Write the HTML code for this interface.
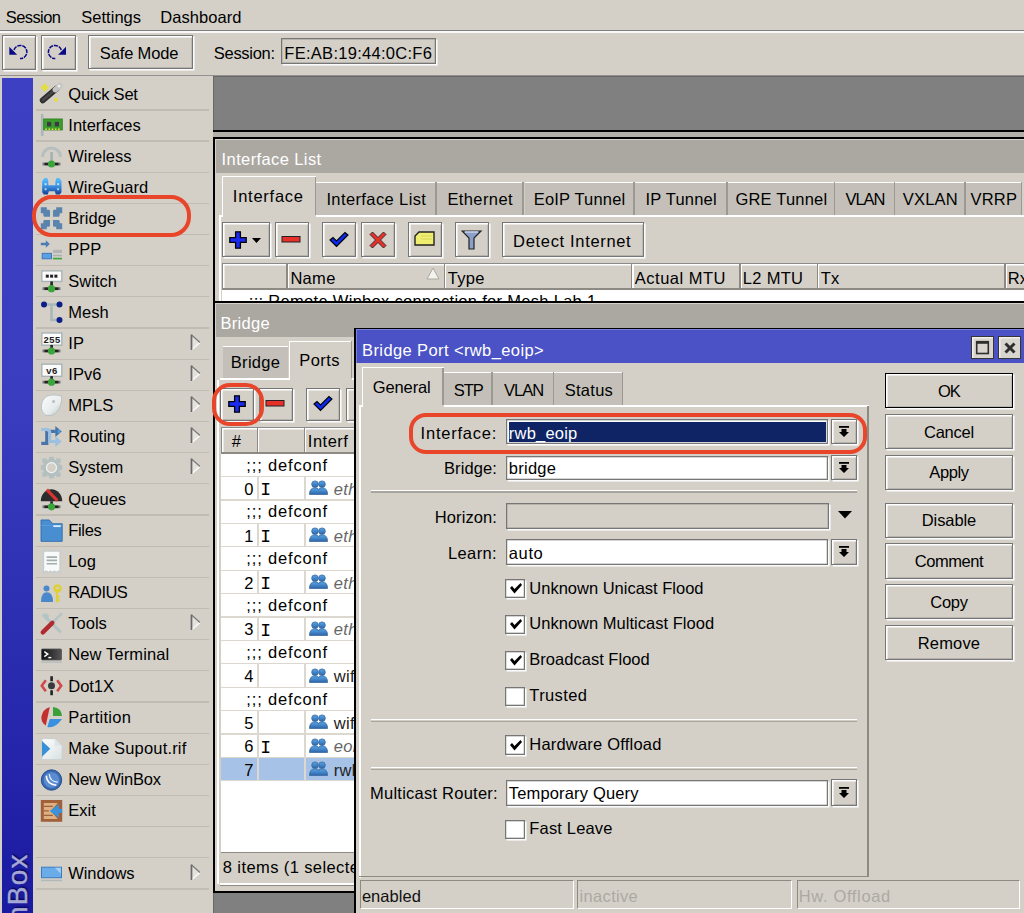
<!DOCTYPE html>
<html><head><meta charset="utf-8"><title>WinBox</title>
<style>
html,body{margin:0;padding:0;}
body{width:1024px;height:913px;position:relative;overflow:hidden;background:#d4d0c8;font-family:"Liberation Sans",sans-serif;font-size:16.5px;color:#000;}
.r{position:absolute;}
.t{position:absolute;white-space:nowrap;line-height:18px;}
.b{position:absolute;box-sizing:border-box;background:#d4d0c8;border:1px solid #767676;box-shadow:inset 1.6px 1.6px 0 #fff,inset 0 0 0 0.4px rgba(118,118,118,.6),1.6px 1.6px 0 #fbfbfb;}
.f{position:absolute;box-sizing:border-box;border:1px solid #767676;box-shadow:inset 0 0 0 0.4px rgba(118,118,118,.6),1.6px 1.6px 0 #fbfbfb;}
.wb{position:absolute;left:2.3px;top:957px;width:130px;height:32px;transform:rotate(-90deg);transform-origin:0 0;font-size:28px;line-height:32px;color:#a4a8d4;text-shadow:1.5px 1px 1.5px #08085a;white-space:nowrap;letter-spacing:1.2px;-webkit-text-stroke:0.4px #a4a8d4;}
</style></head><body>
<div class="t" style="left:5.8px;top:8.2px;letter-spacing:-0.59px;">Session</div>
<div class="t" style="left:81.3px;top:8.2px;letter-spacing:0.02px;">Settings</div>
<div class="t" style="left:160.3px;top:8.2px;letter-spacing:0.06px;">Dashboard</div>
<div class="r" style="left:0px;top:29.8px;width:1024px;height:1.1999999999999993px;background:#7e7e7e"></div>
<div class="r" style="left:0px;top:31px;width:1024px;height:1.7999999999999972px;background:#f8f8f8"></div>
<div class="b" style="left:2px;top:35px;width:34px;height:35px;"></div>
<div class="b" style="left:41px;top:35px;width:35px;height:35px;"></div>
<svg class="r" style="left:0;top:30" width="80" height="45" viewBox="0 30 80 45"><path d="M9.3 46.8 V54.7 H17.2 Z" fill="#0a0a86"/><path d="M14 50 A6.6 6.6 0 1 1 20 58.6" fill="none" stroke="#0a0a86" stroke-width="1.5" stroke-dasharray="4.2 0.9"/><path d="M66 46.8 V54.7 H58.1 Z" fill="#0a0a86"/><path d="M61.3 50 A6.6 6.6 0 1 0 55.3 58.6" fill="none" stroke="#0a0a86" stroke-width="1.5" stroke-dasharray="4.2 0.9"/></svg>
<div class="b" style="left:88px;top:35px;width:105px;height:34px;"></div>
<div class="t" style="left:99.8px;top:43.7px;letter-spacing:-0.14px;">Safe Mode</div>
<div class="t" style="left:213.8px;top:43.7px;letter-spacing:-0.3px">Session:</div>
<div class="f" style="left:281px;top:38px;width:155px;height:26px;background:#d4d0c8"></div>
<div class="t" style="left:284.3px;top:43.7px;letter-spacing:0.28px">FE:AB:19:44:0C:F6</div>
<div class="r" style="left:0px;top:74.6px;width:1024px;height:1.3000000000000114px;background:#939190"></div>
<div class="r" style="left:0px;top:76px;width:2px;height:837px;background:#d4d0c8"></div>
<div class="r" style="left:2px;top:78px;width:31px;height:835px;background:linear-gradient(#3d40c3 0%,#3b3dc0 38%,#2a2cb0 70%,#1a1aa0 100%)"></div>
<div class="wb">WinBox</div>
<div class="r" style="left:33px;top:76px;width:179px;height:837px;background:#d4d0c8"></div>
<div class="t" style="left:68.3px;top:84.5px;letter-spacing:-0.24px;">Quick Set</div>
<div class="r" style="left:36px;top:109.3px;width:173px;height:1.2999999999999972px;background:#c0bcb4"></div>
<div class="t" style="left:68.3px;top:115.7px;">Interfaces</div>
<div class="r" style="left:36px;top:140.4px;width:173px;height:1.299999999999983px;background:#c0bcb4"></div>
<div class="t" style="left:68.3px;top:146.8px;">Wireless</div>
<div class="r" style="left:36px;top:171.6px;width:173px;height:1.3000000000000114px;background:#c0bcb4"></div>
<div class="t" style="left:68.3px;top:178.0px;">WireGuard</div>
<div class="r" style="left:36px;top:202.7px;width:173px;height:1.3000000000000114px;background:#c0bcb4"></div>
<div class="t" style="left:68.3px;top:209.1px;">Bridge</div>
<div class="r" style="left:36px;top:233.9px;width:173px;height:1.299999999999983px;background:#c0bcb4"></div>
<div class="t" style="left:68.3px;top:240.3px;">PPP</div>
<div class="r" style="left:36px;top:265.1px;width:173px;height:1.2999999999999545px;background:#c0bcb4"></div>
<div class="t" style="left:68.3px;top:271.5px;">Switch</div>
<div class="r" style="left:36px;top:296.2px;width:173px;height:1.3000000000000114px;background:#c0bcb4"></div>
<div class="t" style="left:68.3px;top:302.6px;">Mesh</div>
<div class="r" style="left:36px;top:327.4px;width:173px;height:1.3000000000000114px;background:#c0bcb4"></div>
<div class="t" style="left:68.3px;top:333.8px;">IP</div>
<svg class="r" style="left:189.5px;top:333.8px" width="12" height="18" viewBox="0 0 12 18"><path d="M1.5 1 L10 8.5 L1.5 16 Z" fill="#e4e2dc"/><path d="M10 8.5 L1.5 16" stroke="#fafafa" stroke-width="1.5"/><path d="M1.5 1 L10 8.5" stroke="#7a7a7a" stroke-width="1.2"/><path d="M1.5 0.5 V16" stroke="#686868" stroke-width="1.7"/></svg>
<div class="r" style="left:36px;top:358.5px;width:173px;height:1.3000000000000114px;background:#c0bcb4"></div>
<div class="t" style="left:68.3px;top:364.9px;">IPv6</div>
<svg class="r" style="left:189.5px;top:364.9px" width="12" height="18" viewBox="0 0 12 18"><path d="M1.5 1 L10 8.5 L1.5 16 Z" fill="#e4e2dc"/><path d="M10 8.5 L1.5 16" stroke="#fafafa" stroke-width="1.5"/><path d="M1.5 1 L10 8.5" stroke="#7a7a7a" stroke-width="1.2"/><path d="M1.5 0.5 V16" stroke="#686868" stroke-width="1.7"/></svg>
<div class="r" style="left:36px;top:389.7px;width:173px;height:1.3000000000000114px;background:#c0bcb4"></div>
<div class="t" style="left:68.3px;top:396.1px;">MPLS</div>
<svg class="r" style="left:189.5px;top:396.1px" width="12" height="18" viewBox="0 0 12 18"><path d="M1.5 1 L10 8.5 L1.5 16 Z" fill="#e4e2dc"/><path d="M10 8.5 L1.5 16" stroke="#fafafa" stroke-width="1.5"/><path d="M1.5 1 L10 8.5" stroke="#7a7a7a" stroke-width="1.2"/><path d="M1.5 0.5 V16" stroke="#686868" stroke-width="1.7"/></svg>
<div class="r" style="left:36px;top:420.9px;width:173px;height:1.3000000000000114px;background:#c0bcb4"></div>
<div class="t" style="left:68.3px;top:427.3px;">Routing</div>
<svg class="r" style="left:189.5px;top:427.3px" width="12" height="18" viewBox="0 0 12 18"><path d="M1.5 1 L10 8.5 L1.5 16 Z" fill="#e4e2dc"/><path d="M10 8.5 L1.5 16" stroke="#fafafa" stroke-width="1.5"/><path d="M1.5 1 L10 8.5" stroke="#7a7a7a" stroke-width="1.2"/><path d="M1.5 0.5 V16" stroke="#686868" stroke-width="1.7"/></svg>
<div class="r" style="left:36px;top:452.0px;width:173px;height:1.3000000000000114px;background:#c0bcb4"></div>
<div class="t" style="left:68.3px;top:458.4px;">System</div>
<svg class="r" style="left:189.5px;top:458.4px" width="12" height="18" viewBox="0 0 12 18"><path d="M1.5 1 L10 8.5 L1.5 16 Z" fill="#e4e2dc"/><path d="M10 8.5 L1.5 16" stroke="#fafafa" stroke-width="1.5"/><path d="M1.5 1 L10 8.5" stroke="#7a7a7a" stroke-width="1.2"/><path d="M1.5 0.5 V16" stroke="#686868" stroke-width="1.7"/></svg>
<div class="r" style="left:36px;top:483.2px;width:173px;height:1.3000000000000114px;background:#c0bcb4"></div>
<div class="t" style="left:68.3px;top:489.6px;">Queues</div>
<div class="r" style="left:36px;top:514.3px;width:173px;height:1.3000000000000682px;background:#c0bcb4"></div>
<div class="t" style="left:68.3px;top:520.7px;letter-spacing:-0.35px;">Files</div>
<div class="r" style="left:36px;top:545.5px;width:173px;height:1.2999999999999545px;background:#c0bcb4"></div>
<div class="t" style="left:68.3px;top:551.9px;">Log</div>
<div class="r" style="left:36px;top:576.7px;width:173px;height:1.2999999999999545px;background:#c0bcb4"></div>
<div class="t" style="left:68.3px;top:583.1px;letter-spacing:-0.57px;">RADIUS</div>
<div class="r" style="left:36px;top:607.8px;width:173px;height:1.3000000000000682px;background:#c0bcb4"></div>
<div class="t" style="left:68.3px;top:614.2px;">Tools</div>
<svg class="r" style="left:189.5px;top:614.2px" width="12" height="18" viewBox="0 0 12 18"><path d="M1.5 1 L10 8.5 L1.5 16 Z" fill="#e4e2dc"/><path d="M10 8.5 L1.5 16" stroke="#fafafa" stroke-width="1.5"/><path d="M1.5 1 L10 8.5" stroke="#7a7a7a" stroke-width="1.2"/><path d="M1.5 0.5 V16" stroke="#686868" stroke-width="1.7"/></svg>
<div class="r" style="left:36px;top:639.0px;width:173px;height:1.2999999999999545px;background:#c0bcb4"></div>
<div class="t" style="left:68.3px;top:645.4px;letter-spacing:0.11px;">New Terminal</div>
<div class="r" style="left:36px;top:670.1px;width:173px;height:1.2999999999999545px;background:#c0bcb4"></div>
<div class="t" style="left:68.3px;top:676.5px;letter-spacing:-0.04px;">Dot1X</div>
<div class="r" style="left:36px;top:701.3px;width:173px;height:1.3000000000000682px;background:#c0bcb4"></div>
<div class="t" style="left:68.3px;top:707.7px;letter-spacing:0.26px;">Partition</div>
<div class="r" style="left:36px;top:732.5px;width:173px;height:1.2999999999999545px;background:#c0bcb4"></div>
<div class="t" style="left:68.3px;top:738.9px;letter-spacing:0.17px;">Make Supout.rif</div>
<div class="r" style="left:36px;top:763.6px;width:173px;height:1.2999999999999545px;background:#c0bcb4"></div>
<div class="t" style="left:68.3px;top:770.0px;letter-spacing:-0.18px;">New WinBox</div>
<div class="r" style="left:36px;top:794.8px;width:173px;height:1.3000000000000682px;background:#c0bcb4"></div>
<div class="t" style="left:68.3px;top:801.2px;">Exit</div>
<div class="r" style="left:36px;top:825.9px;width:173px;height:1.3000000000000682px;background:#c0bcb4"></div>
<div class="r" style="left:36px;top:857.1px;width:173px;height:1.2999999999999545px;background:#c0bcb4"></div>
<div class="t" style="left:68.3px;top:863.5px;letter-spacing:-0.11px;">Windows</div>
<svg class="r" style="left:189.5px;top:863.5px" width="12" height="18" viewBox="0 0 12 18"><path d="M1.5 1 L10 8.5 L1.5 16 Z" fill="#e4e2dc"/><path d="M10 8.5 L1.5 16" stroke="#fafafa" stroke-width="1.5"/><path d="M1.5 1 L10 8.5" stroke="#7a7a7a" stroke-width="1.2"/><path d="M1.5 0.5 V16" stroke="#686868" stroke-width="1.7"/></svg>
<svg class="r" style="left:0;top:0" width="212" height="913"><defs><linearGradient id="wgg" x1="0" y1="0" x2="0" y2="1"><stop offset="0" stop-color="#5cc0ff"/><stop offset="0.5" stop-color="#3a90e0"/><stop offset="1" stop-color="#163e98"/></linearGradient><linearGradient id="barg" x1="0" y1="0" x2="1" y2="0"><stop offset="0" stop-color="#222" stop-opacity="0"/><stop offset="0.2" stop-color="#222"/><stop offset="0.8" stop-color="#222"/><stop offset="1" stop-color="#222" stop-opacity="0"/></linearGradient><linearGradient id="mplsg" x1="0" y1="0" x2="1" y2="1"><stop offset="0" stop-color="#fafcfc"/><stop offset="0.6" stop-color="#e8ecec"/><stop offset="1" stop-color="#b8c2c2"/></linearGradient><linearGradient id="termg" x1="0" y1="0" x2="1" y2="0"><stop offset="0" stop-color="#111"/><stop offset="1" stop-color="#555"/></linearGradient><linearGradient id="supg" x1="0" y1="0" x2="1" y2="1"><stop offset="0" stop-color="#fff"/><stop offset="1" stop-color="#d8e0e0"/></linearGradient></defs><g transform="translate(40.8,82.70)"><path d="M2 17.5 L15.5 6" stroke="#2e2e2e" stroke-width="6" stroke-linecap="round"/><path d="M2 17.5 L15.5 6" stroke="#484848" stroke-width="2.5" stroke-linecap="round"/><path d="M14.5 7 L19 3" stroke="#c4c4c4" stroke-width="5.5" stroke-linecap="round"/><circle cx="18.3" cy="3.5" r="1.4" fill="#eee"/><path d="M0.3 4.8 H7.7 M4 1 V8.6" stroke="#e2de40" stroke-width="3"/><circle cx="15.2" cy="17" r="2" fill="#e2de40"/></g><g transform="translate(40.8,113.86)"><rect x="0.1" y="0.2" width="2.6" height="21.8" fill="#a8b8b8"/><rect x="2.9" y="5.1" width="18.6" height="11" fill="#3c9e2a" stroke="#2a7a1c" stroke-width="0.8"/><rect x="6.2" y="8" width="4.2" height="4.6" fill="#3a3a44"/><rect x="14" y="8" width="4.2" height="4.6" fill="#3a3a44"/><path d="M4.5 15.3 H20.5" stroke="#e6e040" stroke-width="1.5" stroke-dasharray="1.6 1.6"/></g><g transform="translate(40.8,145.02)"><path d="M1.7 12 A9 9 0 0 1 19.7 12" fill="none" stroke="#b6bebe" stroke-width="3"/><rect x="9.5" y="7" width="2.6" height="11" fill="#a4b2b2"/><rect x="0.7" y="17.6" width="20" height="2.8" fill="url(#barg)"/><circle cx="10.7" cy="19" r="3.6" fill="#3aa53a"/></g><g transform="translate(40.8,176.18)"><path d="M1.4 5 L3.5 1.8 H6.5 L7.5 5 V9 H14.6 V5 L15.6 1.8 H18.6 L20.7 5 V16 L19 18.3 H15 L14 15 H8 L7 18.3 H3 L1.4 16 Z" fill="url(#wgg)"/><rect x="3.8" y="7" width="2" height="2" fill="#bfe4ff"/><rect x="16.3" y="7" width="2" height="2" fill="#bfe4ff"/><rect x="3.8" y="12" width="2" height="2" fill="#a8d0f0"/><rect x="16.3" y="12" width="2" height="2" fill="#a8d0f0"/></g><g transform="translate(40.8,207.34)"><g fill="#5a84ae"><path d="M0 0 H6 V2.5 H8.5 V3 H9.2 V9.3 H3 V8.5 H2.5 V6 H0 Z"/><path d="M0 0 H6 V2.5 H8.5 V3 H9.2 V9.3 H3 V8.5 H2.5 V6 H0 Z" transform="translate(21.4,0) scale(-1,1)"/><path d="M0 0 H6 V2.5 H8.5 V3 H9.2 V9.3 H3 V8.5 H2.5 V6 H0 Z" transform="translate(0,21.9) scale(1,-1)"/><path d="M0 0 H6 V2.5 H8.5 V3 H9.2 V9.3 H3 V8.5 H2.5 V6 H0 Z" transform="translate(21.4,21.9) scale(-1,-1)"/></g></g><g transform="translate(40.8,238.50)"><path d="M0 4.3 H5 V1.7 L9 5.5 L5 9.3 V6.7 H0 Z" fill="#4c7cb4"/><rect x="1.4" y="14.8" width="9.3" height="5.5" fill="#5aa0e4" stroke="#3a72b4" stroke-width="0.9"/><rect x="12.2" y="11.3" width="9" height="3.2" fill="#b4b4b4"/><rect x="12.2" y="16.3" width="9" height="1.5" fill="#a8b0b0"/><rect x="12.2" y="19.3" width="9" height="1.6" fill="#3aa53a"/></g><g transform="translate(40.8,269.66)"><rect x="1" y="1.2" width="20" height="10.6" fill="#fbfbfb" stroke="#a8b4b4" stroke-width="1.4"/><rect x="5" y="5" width="3" height="3" fill="#222"/><rect x="9.3" y="5" width="3" height="3" fill="#222"/><rect x="13.6" y="5" width="3" height="3" fill="#222"/><rect x="9.5" y="11.8" width="2.6" height="5" fill="#222"/><rect x="0.7" y="17.6" width="20" height="2.8" fill="url(#barg)"/><circle cx="10.7" cy="19" r="3.6" fill="#3aa53a"/></g><g transform="translate(40.8,300.82)"><path d="M3.2 3.7 H18.7 M10.7 3.7 V19.2 H18.7" fill="none" stroke="#a8b8b8" stroke-width="2.6"/><circle cx="3.2" cy="3.7" r="3" fill="#0e1e88"/><circle cx="18.7" cy="3.7" r="3" fill="#0e1e88"/><circle cx="18.7" cy="19.2" r="3" fill="#0e1e88"/></g><g transform="translate(40.8,331.98)"><rect x="1" y="1" width="20" height="12.2" fill="#fbfbfb" stroke="#a8b4b4" stroke-width="1.4"/><text x="11" y="10.8" font-family="Liberation Mono" font-size="9.5" font-weight="bold" text-anchor="middle" fill="#222">255</text><rect x="9.5" y="13" width="2.6" height="4" fill="#222"/><rect x="0.7" y="17.6" width="20" height="2.8" fill="url(#barg)"/><circle cx="10.7" cy="19" r="3.6" fill="#3aa53a"/></g><g transform="translate(40.8,363.14)"><rect x="1" y="1" width="20" height="12.2" fill="#fbfbfb" stroke="#a8b4b4" stroke-width="1.4"/><text x="11" y="10.8" font-family="Liberation Mono" font-size="9.5" font-weight="bold" text-anchor="middle" fill="#222">v6</text><rect x="9.5" y="13" width="2.6" height="4" fill="#222"/><rect x="0.7" y="17.6" width="20" height="2.8" fill="url(#barg)"/><circle cx="10.7" cy="19" r="3.6" fill="#3aa53a"/></g><g transform="translate(40.8,394.30)"><path d="M10 0.8 Q18 0.3 21 2 Q21.5 12 15 19 Q10 22.5 5 21 Q0.2 18 0.5 11.5 Q1.5 2 10 0.8 Z" fill="url(#mplsg)" stroke="#b8c2c2" stroke-width="1"/><rect x="11.5" y="6" width="2.5" height="2.5" fill="#b0b8b8"/></g><g transform="translate(40.8,425.46)"><path d="M0.5 18 H6 V6 H15" fill="none" stroke="#4a74a8" stroke-width="3.2"/><path d="M0.5 4 H6 Q9 4 9 8 V16 H15" fill="none" stroke="#9cc0e0" stroke-width="3"/><path d="M14.5 0.5 L21 6 L14.5 11.5 Z" fill="#4a74a8"/><path d="M14.5 10.5 L21 16 L14.5 21.5 Z" fill="#9cc0e0"/><rect x="17" y="4.5" width="2" height="3" fill="#40a8f0"/></g><g transform="translate(40.8,456.62)"><circle cx="10.7" cy="11" r="7.2" fill="none" stroke="#b4c0c0" stroke-width="3.4"/><circle cx="10.7" cy="11" r="5" fill="none" stroke="#eef2f2" stroke-width="1.2"/><g fill="#b4c0c0"><rect x="8.2" y="0.2" width="5" height="3.5"/><rect x="8.2" y="18.3" width="5" height="3.5"/><rect x="0" y="8.5" width="3.5" height="5"/><rect x="17.9" y="8.5" width="3.5" height="5"/><rect x="1.5" y="1.8" width="4.5" height="4.5" transform="rotate(0)"/><rect x="15.4" y="1.8" width="4.5" height="4.5"/><rect x="1.5" y="15.7" width="4.5" height="4.5"/><rect x="15.4" y="15.7" width="4.5" height="4.5"/></g></g><g transform="translate(40.8,487.78)"><path d="M0 13.5 A10.7 12 0 0 1 21.4 13.5 Z" fill="#2c2c2c"/><path d="M6 1.8 L16.5 12.8" stroke="#d83434" stroke-width="3.2"/><rect x="9.5" y="13.5" width="2.6" height="3" fill="#222"/><rect x="0.7" y="17.6" width="20" height="2.8" fill="url(#barg)"/><circle cx="10.7" cy="19" r="3.6" fill="#3aa53a"/></g><g transform="translate(40.8,518.94)"><path d="M0.2 1 H8.5 L12 4.8 H21.4 V22.4 H0.2 Z" fill="#4a8ed2" stroke="#2e6cae" stroke-width="0.9"/><path d="M0.2 6.5 H21.4" stroke="#5a9ede" stroke-width="0.8"/><rect x="12.5" y="6.3" width="7.5" height="1.8" fill="#dcecfa"/></g><g transform="translate(40.8,550.10)"><path d="M2.7 1 H19.2 V22.5 L17.5 21 L15.5 22.5 L13.5 21 L11.5 22.5 L9.5 21 L7.5 22.5 L5.5 21 L2.7 22.5 Z" fill="#f8fafa" stroke="#c4cccc" stroke-width="1.3"/><path d="M5.8 7 H16.2 M5.8 10.3 H16.2 M5.8 13.6 H16.2" stroke="#a4acac" stroke-width="1.6"/></g><g transform="translate(40.8,581.26)"><circle cx="5.7" cy="7.3" r="3" fill="#4a88cc"/><path d="M0.2 20.7 Q0.2 11 6 11 Q12.2 11 12.2 20.7 Z" fill="#4a88cc"/><circle cx="16.7" cy="7.3" r="4.3" fill="#ddd03a"/><rect x="15" y="6" width="3.4" height="1.6" fill="#d4d0c8"/><path d="M16.2 11 V21 M16.2 15.5 H19 M16.2 19 H19" stroke="#ddd03a" stroke-width="2.2"/></g><g transform="translate(40.8,612.42)"><path d="M5 5 L20 20" stroke="#b4c4c4" stroke-width="3.2"/><path d="M0.5 3.5 L3.5 0.5 L5 3 L3 5 Z M5.5 0.5 L8.5 3.5 L6 7 L3 6 Z" fill="#b4c4c4"/><path d="M21 1 L12 10" stroke="#b4c4c4" stroke-width="2.6"/><path d="M11.5 10.5 L2 20" stroke="#b02a30" stroke-width="4.4" stroke-linecap="round"/></g><g transform="translate(40.8,643.58)"><rect x="0.7" y="5.4" width="20" height="11" rx="1" fill="url(#termg)" stroke="#555" stroke-width="0.8"/><path d="M3.5 8 L7 10.5 L3.5 13" fill="none" stroke="#fff" stroke-width="1.4"/><path d="M7.5 14 H10.5" stroke="#fff" stroke-width="1.4"/><rect x="0.2" y="17.8" width="21" height="1.4" fill="#b4bcbc"/></g><g transform="translate(40.8,674.74)"><path d="M5 5.5 L1 11 L5 16.5 M16.4 5.5 L20.4 11 L16.4 16.5" fill="none" stroke="#d04848" stroke-width="2.6"/><rect x="9.5" y="1.5" width="2.6" height="5" fill="#222"/><rect x="9.5" y="15.5" width="2.6" height="5" fill="#222"/><circle cx="10.7" cy="11" r="3.5" fill="#3a3a3a"/></g><g transform="translate(40.8,705.90)"><path d="M9 1 Q2 3 0.5 11 Q0.5 17 5 19.5 L9 1 Z" fill="#c43030"/><path d="M12.2 1 V10 H21.2 Q21 2 12.2 1 Z" fill="#3aa03a"/><path d="M6.5 21 Q14 23 21.2 13 H9 Z" fill="#3a90e0"/></g><g transform="translate(40.8,737.06)"><path d="M1.2 1.6 H14 L21.4 9 V22.6 H1.2 Z" fill="url(#supg)" stroke="#c8d0d0" stroke-width="1"/><path d="M14 1.6 V9 H21.4 Z" fill="#dfe4e8"/><path d="M1.2 4 L9.5 11.8 L1.2 19.8 Z" fill="#3a90d8"/></g><g transform="translate(40.8,768.22)"><circle cx="10.7" cy="11.8" r="10.2" fill="#3a6ab4" stroke="#24508e" stroke-width="1"/><circle cx="10.7" cy="11.8" r="7.8" fill="#5c8cd0"/><path d="M5.5 7.5 Q6 16 15.5 17" fill="none" stroke="#fff" stroke-width="1.6"/><path d="M8.5 6 Q9 13.5 17 14" fill="none" stroke="#e8f0ff" stroke-width="1.2"/></g><g transform="translate(40.8,799.38)"><rect x="0" y="0.6" width="21.4" height="21.8" fill="#a0603a"/><path d="M3 3.5 H17 L10 11.5 L17 19.5 H3 Z" fill="#e4b888" opacity="0.9"/><path d="M3 7 H12 M3 11.5 H8 M3 16 H12" stroke="#a0603a" stroke-width="1.4"/><path d="M9 11.5 L18 4.5 V18.5 Z" fill="#3a92dc"/><rect x="17" y="9.5" width="4.4" height="4" fill="#3a92dc"/></g><g transform="translate(40.8,861.70)"><rect x="0.7" y="5.5" width="20" height="10.5" fill="#6aace8" stroke="#3a7cc4" stroke-width="1"/><path d="M14 6 L20 6 L20 12 Z" fill="#a8d0f4"/><rect x="0.2" y="18" width="21" height="1.5" fill="#b0b8b8"/></g></svg>
<div class="r" style="left:36px;top:888.2px;width:173px;height:1.5px;background:#c2beb6"></div>
<div class="r" style="left:31.5px;top:195px;width:159.5px;height:42px;border:4.4px solid #e8452a;border-radius:20px;box-sizing:border-box"></div>
<div class="r" style="left:212.5px;top:76px;width:811.5px;height:837px;background:#808080;border-left:1.5px solid #686868;border-top:1.5px solid #686868;box-sizing:border-box"></div>
<div class="r" style="left:213px;top:130px;width:811px;height:1.5px;background:#000"></div>
<div class="r" style="left:213px;top:131.5px;width:811px;height:5.699999999999989px;background:#b2afa8"></div>
<div class="r" style="left:213px;top:137.2px;width:811px;height:163.8px;background:#000"></div>
<div class="r" style="left:215.2px;top:138.7px;width:808.8px;height:162.3px;background:#d4d0c8"></div>
<div class="r" style="left:216px;top:140px;width:808px;height:32.599999999999994px;background:#aba8a2"></div>
<div class="t" style="left:221.6px;top:150.4px;color:#fff;letter-spacing:0.39px;">Interface List</div>
<div class="r" style="left:219px;top:215px;width:805px;height:1.5px;background:#fff"></div>
<div class="r" style="left:316px;top:181.8px;width:119.5px;height:33.19999999999999px;background:#c4c0b9;border-top:1.2px solid #fff;box-sizing:border-box"></div>
<div class="r" style="left:435.2px;top:181.8px;width:1.5px;height:33.19999999999999px;background:#9c9992"></div>
<div class="t" style="left:316px;width:120.69999999999999px;text-align:center;top:190.4px;letter-spacing:0.39px;">Interface List</div>
<div class="r" style="left:436.7px;top:181.8px;width:85.80000000000001px;height:33.19999999999999px;background:#c4c0b9;border-top:1.2px solid #fff;box-sizing:border-box"></div>
<div class="r" style="left:522.2px;top:181.8px;width:1.5px;height:33.19999999999999px;background:#9c9992"></div>
<div class="t" style="left:436.7px;width:87.00000000000006px;text-align:center;top:190.4px;letter-spacing:0.39px;">Ethernet</div>
<div class="r" style="left:524.6px;top:181.8px;width:108.79999999999995px;height:33.19999999999999px;background:#c4c0b9;border-top:1.2px solid #fff;box-sizing:border-box"></div>
<div class="r" style="left:633.1px;top:181.8px;width:1.5px;height:33.19999999999999px;background:#9c9992"></div>
<div class="t" style="left:524.6px;width:110.0px;text-align:center;top:190.4px;letter-spacing:0.2px">EoIP Tunnel</div>
<div class="r" style="left:634.6px;top:181.8px;width:91.89999999999998px;height:33.19999999999999px;background:#c4c0b9;border-top:1.2px solid #fff;box-sizing:border-box"></div>
<div class="r" style="left:726.2px;top:181.8px;width:1.5px;height:33.19999999999999px;background:#9c9992"></div>
<div class="t" style="left:634.6px;width:93.10000000000002px;text-align:center;top:190.4px;letter-spacing:0.2px">IP Tunnel</div>
<div class="r" style="left:727.7px;top:181.8px;width:106.09999999999991px;height:33.19999999999999px;background:#c4c0b9;border-top:1.2px solid #fff;box-sizing:border-box"></div>
<div class="r" style="left:833.5px;top:181.8px;width:1.5px;height:33.19999999999999px;background:#9c9992"></div>
<div class="t" style="left:727.7px;width:107.29999999999995px;text-align:center;top:190.4px;letter-spacing:0.2px">GRE Tunnel</div>
<div class="r" style="left:835px;top:181.8px;width:58.799999999999955px;height:33.19999999999999px;background:#c4c0b9;border-top:1.2px solid #fff;box-sizing:border-box"></div>
<div class="r" style="left:893.5px;top:181.8px;width:1.5px;height:33.19999999999999px;background:#9c9992"></div>
<div class="t" style="left:835px;width:60px;text-align:center;top:190.4px;letter-spacing:-1.0px;">VLAN</div>
<div class="r" style="left:895px;top:181.8px;width:69.5px;height:33.19999999999999px;background:#c4c0b9;border-top:1.2px solid #fff;box-sizing:border-box"></div>
<div class="r" style="left:964.2px;top:181.8px;width:1.5px;height:33.19999999999999px;background:#9c9992"></div>
<div class="t" style="left:895px;width:70.70000000000005px;text-align:center;top:190.4px;letter-spacing:0.2px">VXLAN</div>
<div class="r" style="left:965.7px;top:181.8px;width:55.09999999999991px;height:33.19999999999999px;background:#c4c0b9;border-top:1.2px solid #fff;box-sizing:border-box"></div>
<div class="r" style="left:1020.5px;top:181.8px;width:1.5px;height:33.19999999999999px;background:#9c9992"></div>
<div class="t" style="left:965.7px;width:56.299999999999955px;text-align:center;top:190.4px;letter-spacing:0.2px">VRRP</div>
<div class="r" style="left:222px;top:176.4px;width:94px;height:40.599999999999994px;background:#d4d0c8;border-left:1.3px solid #fff;border-top:1.3px solid #fff;box-sizing:border-box"></div>
<div class="r" style="left:314.7px;top:177px;width:1.8000000000000114px;height:38px;background:#9c9992"></div>
<div class="t" style="left:232.8px;top:187.4px;letter-spacing:0.75px;">Interface</div>
<div class="r" style="left:219px;top:216.5px;width:1.5px;height:84.5px;background:#fff"></div>
<div class="b" style="left:222.4px;top:222px;width:47.599999999999994px;height:35.30000000000001px;"></div>
<svg class="r" style="left:229px;top:231px" width="40" height="20" viewBox="0 0 40 20"><path d="M6.6 0.8 H11.4 V6.6 H17.2 V11.4 H11.4 V17.2 H6.6 V11.4 H0.8 V6.6 H6.6 Z" fill="#1a2af0" stroke="#000" stroke-width="1.3"/><path d="M23 7 H32 L27.5 12 Z" fill="#000"/></svg>
<div class="b" style="left:275.2px;top:222px;width:33.80000000000001px;height:35.30000000000001px;"></div>
<svg class="r" style="left:281px;top:235px" width="22" height="10" viewBox="0 0 22 10"><rect x="1" y="1.5" width="18" height="5.5" fill="#e8302a" stroke="#222" stroke-width="1"/></svg>
<div class="b" style="left:322px;top:222px;width:34px;height:35.30000000000001px;"></div>
<svg class="r" style="left:329px;top:231px" width="20" height="17" viewBox="0 0 20 17"><path d="M1 9 L4 6.5 L7.5 10 L16 1.5 L19 4 L7.5 15.5 Z" fill="#0a2aee" stroke="#000" stroke-width="1.1"/></svg>
<div class="b" style="left:361px;top:222px;width:33.69999999999999px;height:35.30000000000001px;"></div>
<svg class="r" style="left:368px;top:230px" width="20" height="20" viewBox="0 0 20 20"><path d="M2 4.5 L4.5 2 L10 7.5 L15.5 2 L18 4.5 L12.5 10 L18 15.5 L15.5 18 L10 12.5 L4.5 18 L2 15.5 L7.5 10 Z" fill="#e8302a" stroke="#222" stroke-width="0.9"/></svg>
<div class="b" style="left:407.7px;top:222px;width:34.30000000000001px;height:35.30000000000001px;"></div>
<svg class="r" style="left:414px;top:230px" width="22" height="18" viewBox="0 0 22 18"><path d="M5 2 H20 V15 H1 V6 Z" fill="#f0ee70" stroke="#222" stroke-width="1.4"/><path d="M7 6 H18 M7 9 H18" stroke="#d8d460" stroke-width="1"/></svg>
<div class="b" style="left:454.7px;top:222px;width:34.30000000000001px;height:35.30000000000001px;"></div>
<svg class="r" style="left:461px;top:229px" width="22" height="22" viewBox="0 0 22 22"><path d="M1 2 H20 L13 9 V20 H8 V9 Z" fill="#8aa0c8" stroke="#222" stroke-width="1.2"/><path d="M4 3 H17" stroke="#c8d4ea" stroke-width="1.5"/></svg>
<div class="b" style="left:501.7px;top:222px;width:142.7px;height:35.30000000000001px;"></div>
<div class="t" style="left:513.1px;top:231.5px;letter-spacing:0.67px;">Detect Internet</div>
<div class="r" style="left:222.4px;top:262.7px;width:801.6px;height:26.30000000000001px;background:#d4d0c8;border-top:1px solid #8a8a8a;border-left:1px solid #8a8a8a;box-shadow:inset 1.5px 1.5px 0 #fff;box-sizing:border-box"></div>
<div class="r" style="left:286.2px;top:264px;width:1.5px;height:25px;background:#8d8a83"></div>
<div class="r" style="left:287.7px;top:264px;width:1.1999999999999886px;height:25px;background:#fff"></div>
<div class="r" style="left:443.8px;top:264px;width:1.5px;height:25px;background:#8d8a83"></div>
<div class="r" style="left:445.3px;top:264px;width:1.1999999999999886px;height:25px;background:#fff"></div>
<div class="r" style="left:630.9px;top:264px;width:1.5px;height:25px;background:#8d8a83"></div>
<div class="r" style="left:632.4px;top:264px;width:1.2000000000000455px;height:25px;background:#fff"></div>
<div class="r" style="left:739.0px;top:264px;width:1.5px;height:25px;background:#8d8a83"></div>
<div class="r" style="left:740.5px;top:264px;width:1.2000000000000455px;height:25px;background:#fff"></div>
<div class="r" style="left:816.8px;top:264px;width:1.5px;height:25px;background:#8d8a83"></div>
<div class="r" style="left:818.3px;top:264px;width:1.2000000000000455px;height:25px;background:#fff"></div>
<div class="r" style="left:1004.1px;top:264px;width:1.5px;height:25px;background:#8d8a83"></div>
<div class="r" style="left:1005.6px;top:264px;width:1.2000000000000455px;height:25px;background:#fff"></div>
<div class="r" style="left:222.4px;top:288px;width:801.6px;height:1.5px;background:#8d8a83"></div>
<div class="t" style="left:290.4px;top:269.0px;letter-spacing:0.3px">Name</div>
<svg class="r" style="left:426px;top:267px" width="14" height="14" viewBox="0 0 14 14"><path d="M7 1 L13 12 H1 Z" fill="#f4f2ee" stroke="#aaa79f" stroke-width="1"/></svg>
<div class="t" style="left:447.8px;top:269.0px;letter-spacing:0.3px">Type</div>
<div class="t" style="left:634.8px;top:269.0px;letter-spacing:0.5px">Actual MTU</div>
<div class="t" style="left:742.8px;top:269.0px;letter-spacing:0.3px">L2 MTU</div>
<div class="t" style="left:820.8px;top:269.0px;">Tx</div>
<div class="t" style="left:1007.8px;top:269.0px;">Rx</div>
<div class="r" style="left:222.4px;top:289.5px;width:801.6px;height:11.5px;background:#fff"></div>
<div class="t" style="left:248.8px;top:291.5px;letter-spacing:0.3px">;;; Remote Winbox connection for Mesh Lab 1</div>
<div class="r" style="left:212.5px;top:300.8px;width:811.5px;height:591.8px;background:#000"></div>
<div class="r" style="left:215px;top:302.5px;width:809px;height:588.5px;background:#d4d0c8"></div>
<div class="r" style="left:216px;top:303.5px;width:808px;height:33.19999999999999px;background:#aba8a2"></div>
<div class="t" style="left:220.4px;top:314.0px;color:#fff;letter-spacing:0.3px">Bridge</div>
<div class="r" style="left:223px;top:346.4px;width:65px;height:31.600000000000023px;background:#c4c0b9;border-top:1.2px solid #fff;box-sizing:border-box"></div>
<div class="t" style="left:230.8px;top:353.0px;letter-spacing:0.3px">Bridge</div>
<div class="r" style="left:219.5px;top:378px;width:180.5px;height:1.5px;background:#fff"></div>
<div class="r" style="left:288.8px;top:340.6px;width:63.5px;height:39.39999999999998px;background:#d4d0c8;border-left:1.3px solid #fff;border-top:1.3px solid #fff;box-sizing:border-box"></div>
<div class="r" style="left:350.8px;top:341px;width:1.6999999999999886px;height:37px;background:#9c9992"></div>
<div class="t" style="left:299.3px;top:351.4px;letter-spacing:0.4px">Ports</div>
<div class="r" style="left:217.3px;top:379.5px;width:1.5px;height:504.5px;background:#fff"></div>
<div class="b" style="left:220.4px;top:387.5px;width:33.5px;height:33.0px;"></div>
<svg class="r" style="left:228px;top:395px" width="20" height="20" viewBox="0 0 20 20"><path d="M6.6 0.8 H11.4 V6.6 H17.2 V11.4 H11.4 V17.2 H6.6 V11.4 H0.8 V6.6 H6.6 Z" fill="#1a2af0" stroke="#000" stroke-width="1.3"/></svg>
<div class="b" style="left:259px;top:387.5px;width:34px;height:33.0px;"></div>
<svg class="r" style="left:265px;top:399px" width="22" height="10" viewBox="0 0 22 10"><rect x="1" y="1.5" width="18" height="5.5" fill="#e8302a" stroke="#222" stroke-width="1"/></svg>
<div class="b" style="left:306.3px;top:387.5px;width:33.5px;height:33.0px;"></div>
<svg class="r" style="left:313px;top:395px" width="20" height="17" viewBox="0 0 20 17"><path d="M1 9 L4 6.5 L7.5 10 L16 1.5 L19 4 L7.5 15.5 Z" fill="#0a2aee" stroke="#000" stroke-width="1.1"/></svg>
<div class="b" style="left:345.8px;top:387.5px;width:34.19999999999999px;height:33.0px;"></div>
<div class="r" style="left:212.2px;top:383.2px;width:52.30000000000001px;height:42.80000000000001px;border:4.4px solid #e8452a;border-radius:18px;box-sizing:border-box"></div>
<div class="r" style="left:221px;top:426.6px;width:179px;height:26.399999999999977px;background:#d4d0c8;border-top:1px solid #8a8a8a;border-left:1px solid #8a8a8a;box-shadow:inset 1.5px 1.5px 0 #fff;box-sizing:border-box"></div>
<div class="r" style="left:256.7px;top:428px;width:1.5px;height:25px;background:#8d8a83"></div>
<div class="r" style="left:258.2px;top:428px;width:1.1999999999999886px;height:25px;background:#fff"></div>
<div class="r" style="left:303.5px;top:428px;width:1.5px;height:25px;background:#8d8a83"></div>
<div class="r" style="left:305px;top:428px;width:1.1999999999999886px;height:25px;background:#fff"></div>
<div class="r" style="left:221px;top:452px;width:179px;height:1.5px;background:#8d8a83"></div>
<div class="t" style="left:231.8px;top:432.0px;font-weight:normal">#</div>
<div class="t" style="left:307.8px;top:432.0px;letter-spacing:0.5px">Interf</div>
<div class="r" style="left:221px;top:453.5px;width:179px;height:398.29999999999995px;background:#fff"></div>
<div class="r" style="left:221px;top:475.9px;width:179px;height:1.3000000000000114px;background:#dcd8d0"></div>
<div class="t" style="left:246.3px;top:455.5px;letter-spacing:0.83px;">;;; defconf</div>
<div class="r" style="left:221px;top:499.3px;width:179px;height:1.3000000000000114px;background:#dcd8d0"></div>
<div class="r" style="left:257px;top:476.9px;width:1.5px;height:23.400000000000034px;background:#dcd8d0"></div>
<div class="r" style="left:304px;top:476.9px;width:1.5px;height:23.400000000000034px;background:#dcd8d0"></div>
<div class="t" style="right:770.5px;top:479.9px;">0</div>
<div class="t" style="left:260.3px;top:481.2px;font-family:Liberation Mono;font-size:18px">I</div>
<svg class="r" style="left:309px;top:480.3px" width="19" height="15" viewBox="0 0 19 15"><defs><linearGradient id="ug" x1="0" y1="0" x2="0" y2="1"><stop offset="0" stop-color="#58a8e8"/><stop offset="1" stop-color="#2e64a8"/></linearGradient></defs><g fill="url(#ug)" stroke="#3a6aa0" stroke-width="0.8"><circle cx="6" cy="4.2" r="3.3"/><circle cx="13" cy="4.2" r="3.3"/><path d="M0.5 14.5 Q0.5 7.8 6 7.8 Q9.5 7.8 9.5 10 Q9.5 7.8 13 7.8 Q18.5 7.8 18.5 14.5 Z"/></g></svg>
<div class="t" style="left:333.8px;top:479.9px;color:#666;font-style:italic;letter-spacing:0.3px">ether2</div>
<div class="r" style="left:221px;top:522.7px;width:179px;height:1.2999999999999545px;background:#dcd8d0"></div>
<div class="t" style="left:246.3px;top:502.3px;letter-spacing:0.83px;">;;; defconf</div>
<div class="r" style="left:221px;top:546.1px;width:179px;height:1.2999999999999545px;background:#dcd8d0"></div>
<div class="r" style="left:257px;top:523.7px;width:1.5px;height:23.399999999999977px;background:#dcd8d0"></div>
<div class="r" style="left:304px;top:523.7px;width:1.5px;height:23.399999999999977px;background:#dcd8d0"></div>
<div class="t" style="right:770.5px;top:526.7px;">1</div>
<div class="t" style="left:260.3px;top:528.0px;font-family:Liberation Mono;font-size:18px">I</div>
<svg class="r" style="left:309px;top:527.1px" width="19" height="15" viewBox="0 0 19 15"><defs><linearGradient id="ug" x1="0" y1="0" x2="0" y2="1"><stop offset="0" stop-color="#58a8e8"/><stop offset="1" stop-color="#2e64a8"/></linearGradient></defs><g fill="url(#ug)" stroke="#3a6aa0" stroke-width="0.8"><circle cx="6" cy="4.2" r="3.3"/><circle cx="13" cy="4.2" r="3.3"/><path d="M0.5 14.5 Q0.5 7.8 6 7.8 Q9.5 7.8 9.5 10 Q9.5 7.8 13 7.8 Q18.5 7.8 18.5 14.5 Z"/></g></svg>
<div class="t" style="left:333.8px;top:526.7px;color:#666;font-style:italic;letter-spacing:0.3px">ether3</div>
<div class="r" style="left:221px;top:569.5px;width:179px;height:1.2999999999999545px;background:#dcd8d0"></div>
<div class="t" style="left:246.3px;top:549.1px;letter-spacing:0.83px;">;;; defconf</div>
<div class="r" style="left:221px;top:592.9px;width:179px;height:1.3000000000000682px;background:#dcd8d0"></div>
<div class="r" style="left:257px;top:570.5px;width:1.5px;height:23.399999999999977px;background:#dcd8d0"></div>
<div class="r" style="left:304px;top:570.5px;width:1.5px;height:23.399999999999977px;background:#dcd8d0"></div>
<div class="t" style="right:770.5px;top:573.5px;">2</div>
<div class="t" style="left:260.3px;top:574.8px;font-family:Liberation Mono;font-size:18px">I</div>
<svg class="r" style="left:309px;top:573.9px" width="19" height="15" viewBox="0 0 19 15"><defs><linearGradient id="ug" x1="0" y1="0" x2="0" y2="1"><stop offset="0" stop-color="#58a8e8"/><stop offset="1" stop-color="#2e64a8"/></linearGradient></defs><g fill="url(#ug)" stroke="#3a6aa0" stroke-width="0.8"><circle cx="6" cy="4.2" r="3.3"/><circle cx="13" cy="4.2" r="3.3"/><path d="M0.5 14.5 Q0.5 7.8 6 7.8 Q9.5 7.8 9.5 10 Q9.5 7.8 13 7.8 Q18.5 7.8 18.5 14.5 Z"/></g></svg>
<div class="t" style="left:333.8px;top:573.5px;color:#666;font-style:italic;letter-spacing:0.3px">ether4</div>
<div class="r" style="left:221px;top:616.3px;width:179px;height:1.3000000000000682px;background:#dcd8d0"></div>
<div class="t" style="left:246.3px;top:595.9px;letter-spacing:0.83px;">;;; defconf</div>
<div class="r" style="left:221px;top:639.7px;width:179px;height:1.2999999999999545px;background:#dcd8d0"></div>
<div class="r" style="left:257px;top:617.3px;width:1.5px;height:23.40000000000009px;background:#dcd8d0"></div>
<div class="r" style="left:304px;top:617.3px;width:1.5px;height:23.40000000000009px;background:#dcd8d0"></div>
<div class="t" style="right:770.5px;top:620.3px;">3</div>
<div class="t" style="left:260.3px;top:621.6px;font-family:Liberation Mono;font-size:18px">I</div>
<svg class="r" style="left:309px;top:620.7px" width="19" height="15" viewBox="0 0 19 15"><defs><linearGradient id="ug" x1="0" y1="0" x2="0" y2="1"><stop offset="0" stop-color="#58a8e8"/><stop offset="1" stop-color="#2e64a8"/></linearGradient></defs><g fill="url(#ug)" stroke="#3a6aa0" stroke-width="0.8"><circle cx="6" cy="4.2" r="3.3"/><circle cx="13" cy="4.2" r="3.3"/><path d="M0.5 14.5 Q0.5 7.8 6 7.8 Q9.5 7.8 9.5 10 Q9.5 7.8 13 7.8 Q18.5 7.8 18.5 14.5 Z"/></g></svg>
<div class="t" style="left:333.8px;top:620.3px;color:#666;font-style:italic;letter-spacing:0.3px">ether5</div>
<div class="r" style="left:221px;top:663.1px;width:179px;height:1.2999999999999545px;background:#dcd8d0"></div>
<div class="t" style="left:246.3px;top:642.7px;letter-spacing:0.83px;">;;; defconf</div>
<div class="r" style="left:221px;top:686.5px;width:179px;height:1.2999999999999545px;background:#dcd8d0"></div>
<div class="r" style="left:257px;top:664.1px;width:1.5px;height:23.399999999999977px;background:#dcd8d0"></div>
<div class="r" style="left:304px;top:664.1px;width:1.5px;height:23.399999999999977px;background:#dcd8d0"></div>
<div class="t" style="right:770.5px;top:667.1px;">4</div>
<svg class="r" style="left:309px;top:667.5px" width="19" height="15" viewBox="0 0 19 15"><defs><linearGradient id="ug" x1="0" y1="0" x2="0" y2="1"><stop offset="0" stop-color="#58a8e8"/><stop offset="1" stop-color="#2e64a8"/></linearGradient></defs><g fill="url(#ug)" stroke="#3a6aa0" stroke-width="0.8"><circle cx="6" cy="4.2" r="3.3"/><circle cx="13" cy="4.2" r="3.3"/><path d="M0.5 14.5 Q0.5 7.8 6 7.8 Q9.5 7.8 9.5 10 Q9.5 7.8 13 7.8 Q18.5 7.8 18.5 14.5 Z"/></g></svg>
<div class="t" style="left:333.8px;top:667.1px;color:#222;letter-spacing:0.3px">wifi1</div>
<div class="r" style="left:221px;top:709.9px;width:179px;height:1.3000000000000682px;background:#dcd8d0"></div>
<div class="t" style="left:246.3px;top:689.5px;letter-spacing:0.83px;">;;; defconf</div>
<div class="r" style="left:221px;top:733.3px;width:179px;height:1.3000000000000682px;background:#dcd8d0"></div>
<div class="r" style="left:257px;top:710.9px;width:1.5px;height:23.399999999999977px;background:#dcd8d0"></div>
<div class="r" style="left:304px;top:710.9px;width:1.5px;height:23.399999999999977px;background:#dcd8d0"></div>
<div class="t" style="right:770.5px;top:713.9px;">5</div>
<svg class="r" style="left:309px;top:714.3px" width="19" height="15" viewBox="0 0 19 15"><defs><linearGradient id="ug" x1="0" y1="0" x2="0" y2="1"><stop offset="0" stop-color="#58a8e8"/><stop offset="1" stop-color="#2e64a8"/></linearGradient></defs><g fill="url(#ug)" stroke="#3a6aa0" stroke-width="0.8"><circle cx="6" cy="4.2" r="3.3"/><circle cx="13" cy="4.2" r="3.3"/><path d="M0.5 14.5 Q0.5 7.8 6 7.8 Q9.5 7.8 9.5 10 Q9.5 7.8 13 7.8 Q18.5 7.8 18.5 14.5 Z"/></g></svg>
<div class="t" style="left:333.8px;top:713.9px;color:#222;letter-spacing:0.3px">wifi2</div>
<div class="r" style="left:221px;top:756.7px;width:179px;height:1.2999999999999545px;background:#dcd8d0"></div>
<div class="r" style="left:257px;top:734.3px;width:1.5px;height:23.40000000000009px;background:#dcd8d0"></div>
<div class="r" style="left:304px;top:734.3px;width:1.5px;height:23.40000000000009px;background:#dcd8d0"></div>
<div class="t" style="right:770.5px;top:737.3px;">6</div>
<div class="t" style="left:260.3px;top:738.6px;font-family:Liberation Mono;font-size:18px">I</div>
<svg class="r" style="left:309px;top:737.7px" width="19" height="15" viewBox="0 0 19 15"><defs><linearGradient id="ug" x1="0" y1="0" x2="0" y2="1"><stop offset="0" stop-color="#58a8e8"/><stop offset="1" stop-color="#2e64a8"/></linearGradient></defs><g fill="url(#ug)" stroke="#3a6aa0" stroke-width="0.8"><circle cx="6" cy="4.2" r="3.3"/><circle cx="13" cy="4.2" r="3.3"/><path d="M0.5 14.5 Q0.5 7.8 6 7.8 Q9.5 7.8 9.5 10 Q9.5 7.8 13 7.8 Q18.5 7.8 18.5 14.5 Z"/></g></svg>
<div class="t" style="left:333.8px;top:737.3px;color:#666;font-style:italic;letter-spacing:0.3px">eoip</div>
<div class="r" style="left:221px;top:757.7px;width:179px;height:23.399999999999977px;background:#a6c2e6"></div>
<div class="r" style="left:221px;top:780.1px;width:179px;height:1.2999999999999545px;background:#dcd8d0"></div>
<div class="r" style="left:257px;top:757.7px;width:1.5px;height:23.399999999999977px;background:#dcd8d0"></div>
<div class="r" style="left:304px;top:757.7px;width:1.5px;height:23.399999999999977px;background:#dcd8d0"></div>
<div class="t" style="right:770.5px;top:760.7px;">7</div>
<svg class="r" style="left:309px;top:761.1px" width="19" height="15" viewBox="0 0 19 15"><defs><linearGradient id="ug" x1="0" y1="0" x2="0" y2="1"><stop offset="0" stop-color="#58a8e8"/><stop offset="1" stop-color="#2e64a8"/></linearGradient></defs><g fill="url(#ug)" stroke="#3a6aa0" stroke-width="0.8"><circle cx="6" cy="4.2" r="3.3"/><circle cx="13" cy="4.2" r="3.3"/><path d="M0.5 14.5 Q0.5 7.8 6 7.8 Q9.5 7.8 9.5 10 Q9.5 7.8 13 7.8 Q18.5 7.8 18.5 14.5 Z"/></g></svg>
<div class="t" style="left:333.8px;top:760.7px;color:#222;letter-spacing:0.22px;">rwb_eoip</div>
<div class="r" style="left:221px;top:851.8px;width:179px;height:1.400000000000091px;background:#8d8a83"></div>
<div class="t" style="left:222.8px;top:857.7px;letter-spacing:0.4px">8 items (1 selected)</div>
<div class="r" style="left:219.5px;top:883.4px;width:180.5px;height:1.3999999999999773px;background:#fff"></div>
<div class="r" style="left:219.5px;top:884.8px;width:180.5px;height:1.5px;background:#8d8a83"></div>
<div class="r" style="left:354.3px;top:327.9px;width:669.7px;height:585.1px;background:#000"></div>
<div class="r" style="left:356px;top:329.4px;width:668px;height:583.6px;background:#d4d0c8"></div>
<div class="r" style="left:356px;top:329.4px;width:668px;height:34.0px;background:#4a52c6;border-top:1.3px solid #7a82e0;border-left:1.3px solid #7a82e0;box-sizing:border-box"></div>
<div class="t" style="left:362.1px;top:340.7px;color:#fff;letter-spacing:0.39px;">Bridge Port &lt;rwb_eoip&gt;</div>
<div class="r" style="left:971.3px;top:336.1px;width:22.5px;height:22.5px;background:#d8d5ce;border:1.5px solid #363636;box-shadow:inset 1.5px 1.5px 0 #f2f0ec;box-sizing:border-box"></div>
<svg class="r" style="left:975px;top:339.5px" width="15" height="15" viewBox="0 0 15 15"><rect x="1.7" y="1.7" width="11.6" height="11.8" fill="none" stroke="#2e2e2e" stroke-width="1.6"/><rect x="1" y="1" width="13" height="2.8" fill="#2e2e2e"/></svg>
<div class="r" style="left:997.8px;top:336.1px;width:22.800000000000068px;height:22.5px;background:#d8d5ce;border:1.5px solid #363636;box-shadow:inset 1.5px 1.5px 0 #f2f0ec;box-sizing:border-box"></div>
<svg class="r" style="left:1002.5px;top:340.5px" width="14" height="14" viewBox="0 0 14 14"><path d="M2.5 2.5 L11.5 11.5 M11.5 2.5 L2.5 11.5" stroke="#2e2e2e" stroke-width="3"/></svg>
<div class="r" style="left:359px;top:405px;width:509.5px;height:1.5px;background:#fff"></div>
<div class="r" style="left:443.8px;top:372.3px;width:47.80000000000001px;height:33.19999999999999px;background:#c4c0b9;border-top:1.2px solid #fff;box-sizing:border-box"></div>
<div class="r" style="left:491.3px;top:372.3px;width:1.5px;height:33.19999999999999px;background:#9c9992"></div>
<div class="t" style="left:443.8px;width:49.0px;text-align:center;top:380.5px;letter-spacing:-1.0px;">STP</div>
<div class="r" style="left:492.8px;top:372.3px;width:60.39999999999992px;height:33.19999999999999px;background:#c4c0b9;border-top:1.2px solid #fff;box-sizing:border-box"></div>
<div class="r" style="left:552.9px;top:372.3px;width:1.5px;height:33.19999999999999px;background:#9c9992"></div>
<div class="t" style="left:492.8px;width:61.599999999999966px;text-align:center;top:380.5px;letter-spacing:-1.0px;">VLAN</div>
<div class="r" style="left:554.4px;top:372.3px;width:67.79999999999995px;height:33.19999999999999px;background:#c4c0b9;border-top:1.2px solid #fff;box-sizing:border-box"></div>
<div class="r" style="left:621.9px;top:372.3px;width:1.5px;height:33.19999999999999px;background:#9c9992"></div>
<div class="t" style="left:554.4px;width:69.0px;text-align:center;top:380.5px;letter-spacing:0.29px;">Status</div>
<div class="r" style="left:362.3px;top:367px;width:81.69999999999999px;height:40px;background:#d4d0c8;border-left:1.3px solid #fff;border-top:1.3px solid #fff;box-sizing:border-box"></div>
<div class="r" style="left:442.3px;top:367.5px;width:1.6999999999999886px;height:37.5px;background:#9c9992"></div>
<div class="t" style="left:372.8px;top:378.0px;letter-spacing:-0.12px;">General</div>
<div class="r" style="left:359.3px;top:406.5px;width:1.5px;height:471.0px;background:#fff"></div>
<div class="r" style="left:867.2px;top:406px;width:1.5px;height:470px;background:#8d8a83"></div>
<div class="r" style="left:359.3px;top:875.5px;width:509.40000000000003px;height:1.5px;background:#8d8a83"></div>
<div class="t" style="right:527.0px;top:423.6px;letter-spacing:0.76px;">Interface:</div>
<div class="f" style="left:506.2px;top:418.6px;width:322.2px;height:25.899999999999977px;background:#fff"></div>
<div class="r" style="left:509px;top:421.5px;width:316.5px;height:20.30000000000001px;background:#0f2464"></div>
<div class="t" style="left:508.8px;top:423.6px;color:#fff;letter-spacing:0.22px;">rwb_eoip</div>
<div class="b" style="left:831.3px;top:418.6px;width:26.0px;height:25.799999999999955px;"></div>
<svg class="r" style="left:837.3px;top:424.5px" width="14" height="14" viewBox="0 0 14 14"><rect x="2" y="1" width="10" height="1.8" fill="#000"/><path d="M4.5 4 H9.5 V7 H12 L7 12 L2 7 H4.5 Z" fill="#000"/></svg>
<div class="r" style="left:408.8px;top:412.6px;width:457.90000000000003px;height:41.599999999999966px;border:4.4px solid #e8452a;border-radius:17px;box-sizing:border-box"></div>
<div class="t" style="right:527.0px;top:459.2px;letter-spacing:0.1px;">Bridge:</div>
<div class="f" style="left:506.2px;top:455.7px;width:322.2px;height:24.5px;background:#fff"></div>
<div class="t" style="left:508.8px;top:459.2px;letter-spacing:0.26px;">bridge</div>
<div class="b" style="left:831.3px;top:454.7px;width:26.0px;height:25.80000000000001px;"></div>
<svg class="r" style="left:837.3px;top:460.6px" width="14" height="14" viewBox="0 0 14 14"><rect x="2" y="1" width="10" height="1.8" fill="#000"/><path d="M4.5 4 H9.5 V7 H12 L7 12 L2 7 H4.5 Z" fill="#000"/></svg>
<div class="r" style="left:371.2px;top:490.2px;width:485.8px;height:1.1000000000000227px;background:#fff"></div>
<div class="r" style="left:371.2px;top:491.3px;width:485.8px;height:1.3999999999999773px;background:#a8a59e"></div>
<div class="t" style="right:527.0px;top:507.6px;letter-spacing:0.09px;">Horizon:</div>
<div class="f" style="left:506.2px;top:503.2px;width:322.8px;height:25.69999999999999px;background:#d4d0c8"></div>
<svg class="r" style="left:837px;top:510px" width="16" height="10" viewBox="0 0 16 10"><path d="M1 1 H15 L8 8.5 Z" fill="#000"/></svg>
<div class="t" style="right:527.0px;top:543.6px;letter-spacing:0.36px;">Learn:</div>
<div class="f" style="left:506.2px;top:539px;width:322.2px;height:25.799999999999955px;background:#fff"></div>
<div class="t" style="left:508.8px;top:543.6px;letter-spacing:0.62px;">auto</div>
<div class="b" style="left:831px;top:538.5px;width:25.600000000000023px;height:26.899999999999977px;"></div>
<svg class="r" style="left:836.8px;top:545.0px" width="14" height="14" viewBox="0 0 14 14"><rect x="2" y="1" width="10" height="1.8" fill="#000"/><path d="M4.5 4 H9.5 V7 H12 L7 12 L2 7 H4.5 Z" fill="#000"/></svg>
<div class="f" style="left:505.4px;top:578.6px;width:19.899999999999977px;height:19.399999999999977px;background:#fff"></div>
<svg class="r" style="left:508.5px;top:582.1px" width="14" height="13" viewBox="0 0 14 13"><path d="M1 6 L3 4 L5.5 7 L11.5 1 L13 3 L5.5 11.5 Z" fill="#000"/></svg>
<div class="t" style="left:529.3px;top:578.6px;letter-spacing:-0.0px;">Unknown Unicast Flood</div>
<div class="f" style="left:505.4px;top:614.6px;width:19.899999999999977px;height:19.399999999999977px;background:#fff"></div>
<svg class="r" style="left:508.5px;top:618.1px" width="14" height="13" viewBox="0 0 14 13"><path d="M1 6 L3 4 L5.5 7 L11.5 1 L13 3 L5.5 11.5 Z" fill="#000"/></svg>
<div class="t" style="left:529.3px;top:614.0px;letter-spacing:0.02px;">Unknown Multicast Flood</div>
<div class="f" style="left:505.4px;top:650.6px;width:19.899999999999977px;height:19.399999999999977px;background:#fff"></div>
<svg class="r" style="left:508.5px;top:654.1px" width="14" height="13" viewBox="0 0 14 13"><path d="M1 6 L3 4 L5.5 7 L11.5 1 L13 3 L5.5 11.5 Z" fill="#000"/></svg>
<div class="t" style="left:529.3px;top:649.5px;letter-spacing:0.02px;">Broadcast Flood</div>
<div class="f" style="left:505.4px;top:686.6px;width:19.899999999999977px;height:19.399999999999977px;background:#fff"></div>
<div class="t" style="left:529.3px;top:685.5px;letter-spacing:0.39px;">Trusted</div>
<div class="r" style="left:371.2px;top:719.4px;width:485.8px;height:1.1000000000000227px;background:#fff"></div>
<div class="r" style="left:371.2px;top:720.5px;width:485.8px;height:1.3999999999999773px;background:#a8a59e"></div>
<div class="f" style="left:505.4px;top:735.2px;width:19.899999999999977px;height:19.399999999999977px;background:#fff"></div>
<svg class="r" style="left:508.5px;top:738.7px" width="14" height="13" viewBox="0 0 14 13"><path d="M1 6 L3 4 L5.5 7 L11.5 1 L13 3 L5.5 11.5 Z" fill="#000"/></svg>
<div class="t" style="left:529.3px;top:734.5px;letter-spacing:0.2px">Hardware Offload</div>
<div class="r" style="left:371.2px;top:767.4px;width:485.8px;height:1.1000000000000227px;background:#fff"></div>
<div class="r" style="left:371.2px;top:768.5px;width:485.8px;height:1.3999999999999773px;background:#a8a59e"></div>
<div class="t" style="left:370.0px;top:784.0px;letter-spacing:0.24px;">Multicast Router:</div>
<div class="f" style="left:506.2px;top:780.3px;width:322.2px;height:25.700000000000045px;background:#fff"></div>
<div class="t" style="left:508.8px;top:784.0px;letter-spacing:0.16px;">Temporary Query</div>
<div class="b" style="left:831.3px;top:779px;width:25.300000000000068px;height:27px;"></div>
<svg class="r" style="left:837.0px;top:785.5px" width="14" height="14" viewBox="0 0 14 14"><rect x="2" y="1" width="10" height="1.8" fill="#000"/><path d="M4.5 4 H9.5 V7 H12 L7 12 L2 7 H4.5 Z" fill="#000"/></svg>
<div class="f" style="left:505.4px;top:819.6px;width:19.899999999999977px;height:19.399999999999977px;background:#fff"></div>
<div class="t" style="left:529.3px;top:819.3px;letter-spacing:0.17px;">Fast Leave</div>
<div class="b" style="left:885.3px;top:373.3px;width:127.30000000000007px;height:35.0px;border:1.6px solid #000"></div>
<div class="t" style="left:885.3px;width:127.30000000000007px;text-align:center;top:382.0px;letter-spacing:-1.0px;">OK</div>
<div class="b" style="left:885.3px;top:414.2px;width:127.30000000000007px;height:35.0px;"></div>
<div class="t" style="left:885.3px;width:127.30000000000007px;text-align:center;top:422.7px;letter-spacing:-0.26px;">Cancel</div>
<div class="b" style="left:885.3px;top:454.7px;width:127.30000000000007px;height:35.0px;"></div>
<div class="t" style="left:885.3px;width:127.30000000000007px;text-align:center;top:463.2px;letter-spacing:-0.38px;">Apply</div>
<div class="b" style="left:885.3px;top:502.8px;width:127.30000000000007px;height:35.69999999999999px;"></div>
<div class="t" style="left:885.3px;width:127.30000000000007px;text-align:center;top:511.3px;letter-spacing:-0.11px;">Disable</div>
<div class="b" style="left:885.3px;top:543.3px;width:127.30000000000007px;height:35.40000000000009px;"></div>
<div class="t" style="left:885.3px;width:127.30000000000007px;text-align:center;top:551.8px;letter-spacing:-0.44px;">Comment</div>
<div class="b" style="left:885.3px;top:584.4px;width:127.30000000000007px;height:34.80000000000007px;"></div>
<div class="t" style="left:885.3px;width:127.30000000000007px;text-align:center;top:592.9px;letter-spacing:-0.29px;">Copy</div>
<div class="b" style="left:885.3px;top:625px;width:127.30000000000007px;height:35.39999999999998px;"></div>
<div class="t" style="left:885.3px;width:127.30000000000007px;text-align:center;top:633.5px;letter-spacing:0.15px;">Remove</div>
<div class="r" style="left:359.6px;top:880.4px;width:214.29999999999995px;height:29.100000000000023px;border-top:1.5px solid #8d8a83;border-left:1.5px solid #8d8a83;border-bottom:1.5px solid #fff;border-right:1.5px solid #fff;box-sizing:border-box"></div>
<div class="t" style="left:361.9px;top:886.6px;color:#111;letter-spacing:0.04px;">enabled</div>
<div class="r" style="left:577.3px;top:880.4px;width:214.5px;height:29.100000000000023px;border-top:1.5px solid #8d8a83;border-left:1.5px solid #8d8a83;border-bottom:1.5px solid #fff;border-right:1.5px solid #fff;box-sizing:border-box"></div>
<div class="t" style="left:579.6px;top:886.6px;color:#aca9a2;letter-spacing:0.32px;">inactive</div>
<div class="r" style="left:796.5px;top:880.4px;width:223.10000000000002px;height:29.100000000000023px;border-top:1.5px solid #8d8a83;border-left:1.5px solid #8d8a83;border-bottom:1.5px solid #fff;border-right:1.5px solid #fff;box-sizing:border-box"></div>
<div class="t" style="left:798.8px;top:886.6px;color:#aca9a2;letter-spacing:0.64px;">Hw. Offload</div>
</body></html>
